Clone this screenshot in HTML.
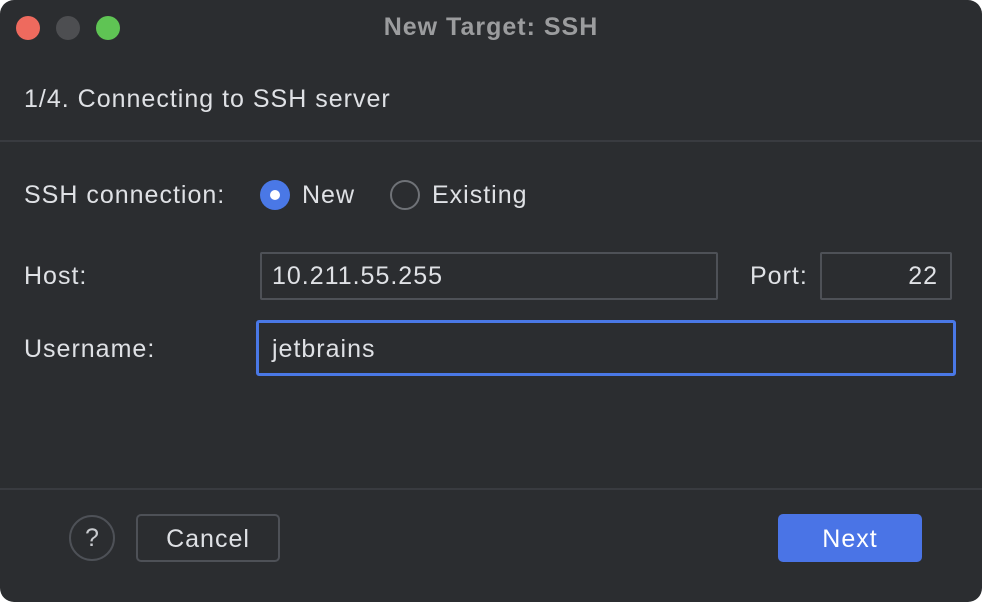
<!DOCTYPE html>
<html><head><style>
body{margin:0;background:#ffffff;width:982px;height:602px;overflow:hidden;font-family:"Liberation Sans",sans-serif;}
.win{position:absolute;left:0;top:0;width:982px;height:602px;background:#2b2d30;border-radius:14px;overflow:hidden;color:#dfe1e5;font-size:25px;letter-spacing:1px;}
.abs{position:absolute;}
.dot{position:absolute;top:16px;width:24px;height:24px;border-radius:50%;}
.line{position:absolute;left:0;width:982px;height:2px;background:#393b40;}
.field{position:absolute;border:2px solid #4e5157;box-sizing:border-box;border-radius:2px;}
.t{position:absolute;white-space:nowrap;line-height:1;}
</style></head><body>
<div class="win">
 <div class="dot" style="left:16px;background:#ee6a5e"></div>
 <div class="dot" style="left:56px;background:#4d4e51"></div>
 <div class="dot" style="left:96px;background:#5fc454"></div>
 <div class="t" style="left:0;width:982px;text-align:center;top:15px;font-weight:bold;color:#9b9c9e;">New Target: SSH</div>
 <div class="t" style="left:24px;top:87px;">1/4. Connecting to SSH server</div>
 <div class="line" style="top:140px"></div>
 <div class="t" style="left:24px;top:183px;">SSH connection:</div>
 <div class="abs" style="left:260px;top:180px;width:30px;height:30px;border-radius:50%;background:#4a78e6;"></div>
 <div class="abs" style="left:270px;top:190px;width:10px;height:10px;border-radius:50%;background:#fff;"></div>
 <div class="t" style="left:302px;top:183px;">New</div>
 <div class="abs" style="left:390px;top:180px;width:30px;height:30px;border-radius:50%;border:2px solid #6f7277;box-sizing:border-box;"></div>
 <div class="t" style="left:432px;top:183px;">Existing</div>
 <div class="t" style="left:24px;top:264px;">Host:</div>
 <div class="field" style="left:260px;top:252px;width:458px;height:48px;"></div>
 <div class="t" style="left:272px;top:264px;">10.211.55.255</div>
 <div class="t" style="left:750px;top:264px;">Port:</div>
 <div class="field" style="left:820px;top:252px;width:132px;height:48px;"></div>
 <div class="t" style="left:820px;width:118px;text-align:right;top:264px;">22</div>
 <div class="t" style="left:24px;top:337px;">Username:</div>
 <div class="abs" style="left:256px;top:320px;width:700px;height:56px;border:3px solid #4a78e6;box-sizing:border-box;border-radius:3px;"></div>
 <div class="t" style="left:272px;top:337px;">jetbrains</div>
 <div class="line" style="top:488px"></div>
 <div class="abs" style="left:69px;top:515px;width:46px;height:46px;border-radius:50%;border:2px solid #4e5157;box-sizing:border-box;"></div>
 <div class="t" style="left:69px;width:46px;text-align:center;top:526px;color:#c9cbcf;letter-spacing:0;">?</div>
 <div class="abs" style="left:136px;top:514px;width:144px;height:48px;border:2px solid #4e5157;box-sizing:border-box;border-radius:5px;"></div>
 <div class="t" style="left:136px;width:144px;text-align:center;top:527px;">Cancel</div>
 <div class="abs" style="left:778px;top:514px;width:144px;height:48px;background:#4a74e6;border-radius:5px;"></div>
 <div class="t" style="left:778px;width:144px;text-align:center;top:527px;color:#fff;">Next</div>
</div>
</body></html>
